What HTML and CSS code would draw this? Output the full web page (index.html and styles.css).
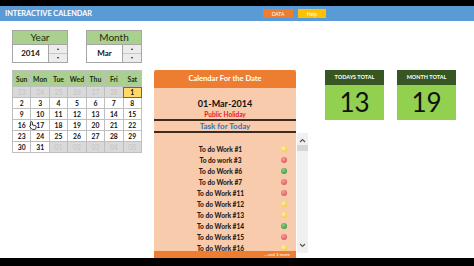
FILE: index.html
```html
<!DOCTYPE html>
<html lang="en">
<head>
    <meta charset="UTF-8">
    <meta name="viewport" content="width=device-width, initial-scale=1.0">
    <title>Interactive Calendar</title>
    <link rel="stylesheet" href="styles.css">
</head>
<body>
    <div class="letterbox"></div>

    <header class="topbar">
        <span class="title">INTERACTIVE CALENDAR</span>
        <div class="top-buttons">
            <span class="btn btn-data">DATA</span>
            <span class="btn btn-help">Help</span>
        </div>
    </header>

    <main class="main">
        <section class="left">
            <div class="pickers">
                <div class="picker">
                    <div class="picker-head">Year</div>
                    <div class="picker-body">
                        <span class="picker-value">2014</span>
                        <div class="spin">
                            <span class="spin-btn"><i class="tri up"></i></span>
                            <span class="spin-btn"><i class="tri down"></i></span>
                        </div>
                    </div>
                </div>
                <div class="picker">
                    <div class="picker-head">Month</div>
                    <div class="picker-body">
                        <span class="picker-value">Mar</span>
                        <div class="spin">
                            <span class="spin-btn"><i class="tri up"></i></span>
                            <span class="spin-btn"><i class="tri down"></i></span>
                        </div>
                    </div>
                </div>
            </div>

            <div class="cal-wrap">
                <table class="cal">
                    <thead>
                        <tr><th>Sun</th><th>Mon</th><th>Tue</th><th>Wed</th><th>Thu</th><th>Fri</th><th>Sat</th></tr>
                    </thead>
                    <tbody>
                        <tr><td class="off">23</td><td class="off">24</td><td class="off">25</td><td class="off">26</td><td class="off">27</td><td class="off">28</td><td class="today">1</td></tr>
                        <tr><td>2</td><td>3</td><td>4</td><td>5</td><td>6</td><td>7</td><td>8</td></tr>
                        <tr><td>9</td><td>10</td><td>11</td><td>12</td><td>13</td><td>14</td><td>15</td></tr>
                        <tr><td>16</td><td>17</td><td>18</td><td>19</td><td>20</td><td>21</td><td>22</td></tr>
                        <tr><td>23</td><td>24</td><td>25</td><td>26</td><td>27</td><td>28</td><td>29</td></tr>
                        <tr><td>30</td><td>31</td><td class="off">01</td><td class="off">02</td><td class="off">03</td><td class="off">04</td><td class="off">05</td></tr>
                    </tbody>
                </table>
                <!-- mouse pointer caught in the screenshot -->
                <svg class="pointer" width="8" height="9" viewBox="0 0 8 9">
                    <path d="M2.5 0.6 C3.2 0.6 3.4 1 3.4 1.6 V4 L6.2 4.5 C7 4.7 7.3 5.1 7.2 5.8 L6.8 7.6 C6.7 8.1 6.4 8.4 5.9 8.4 H3.4 C3 8.4 2.7 8.2 2.5 7.9 L0.8 5.6 C0.5 5.1 0.7 4.6 1.2 4.5 C1.5 4.4 1.7 4.6 1.6 4.7 V1.6 C1.6 1 1.9 0.6 2.5 0.6 Z" fill="#fff" stroke="#000" stroke-width="0.8"/>
                </svg>
            </div>
        </section>

        <section class="panel">
            <div class="panel-head">Calendar For the Date</div>
            <div class="panel-date">01-Mar-2014</div>
            <div class="panel-holiday">Public Holiday</div>
            <div class="panel-task">Task for Today</div>
            <ul class="tasks">
                <li><span>To do Work #1</span><i class="dot yellow"></i></li>
                <li><span>To do work #3</span><i class="dot red"></i></li>
                <li><span>To do Work #6</span><i class="dot green"></i></li>
                <li><span>To do Work #7</span><i class="dot red"></i></li>
                <li><span>To do Work #11</span><i class="dot red"></i></li>
                <li><span>To do Work #12</span><i class="dot yellow"></i></li>
                <li><span>To do Work #13</span><i class="dot yellow"></i></li>
                <li><span>To do Work #14</span><i class="dot green"></i></li>
                <li><span>To do Work #15</span><i class="dot red"></i></li>
                <li><span>To do Work #16</span><i class="dot yellow"></i></li>
            </ul>
            <div class="panel-foot">...and 3 more</div>
        </section>

        <div class="scrollbar">
            <svg class="arrow" width="7" height="5" viewBox="0 0 7 5"><path d="M1 4 L3.5 1.5 L6 4" fill="none" stroke="#555" stroke-width="1.1"/></svg>
            <span class="thumb"></span>
            <svg class="arrow bottom" width="7" height="5" viewBox="0 0 7 5"><path d="M1 1 L3.5 3.5 L6 1" fill="none" stroke="#555" stroke-width="1.1"/></svg>
        </div>

        <div class="totals">
            <div class="total">
                <div class="total-head">TODAYS TOTAL</div>
                <div class="total-value">13</div>
            </div>
            <div class="total">
                <div class="total-head">MONTH TOTAL</div>
                <div class="total-value">19</div>
            </div>
        </div>
    </main>

    <div class="letterbox bottom"></div>
</body>
</html>
```

FILE: styles.css
```css
body {
    margin: 0;
    background-color: #fff;
    font-family: 'Lato', 'Liberation Sans', sans-serif;
    color: #111;
    width: 474px;
    height: 266px;
    overflow: hidden;
}

.letterbox {
    height: 6px;
    background-color: #000;
}

.letterbox.bottom {
    height: 8px;
}

.topbar {
    display: flex;
    align-items: center;
    height: 15px;
    padding-left: 5px;
    background-color: #5b9bd5;
}

.title {
    color: #fff;
    font-size: 7.3px;
    font-weight: 700;
}

.top-buttons {
    display: flex;
    gap: 5px;
    margin-left: auto;
    margin-right: 148px;
}

.btn {
    display: flex;
    align-items: center;
    justify-content: center;
    height: 9px;
    color: #fff;
    font-size: 5px;
}

.btn-data {
    width: 30px;
    background-color: #ed7d31;
}

.btn-help {
    width: 28px;
    background-color: #ffc000;
}

.main {
    display: flex;
    align-items: flex-start;
    height: 237px;
    padding-left: 12px;
    overflow: hidden;
}

/* left column */
.left {
    width: 130px;
    padding-top: 9px;
}

.pickers {
    display: flex;
    gap: 18px;
    margin-bottom: 7px;
}

.picker {
    width: 54px;
    border: 1px solid #a6a6a6;
}

.picker-head {
    height: 13px;
    line-height: 13px;
    text-align: center;
    background-color: #a9d08e;
    border-bottom: 1px solid #a6a6a6;
    font-size: 10px;
    color: #1e2a14;
}

.picker-body {
    display: flex;
    height: 17px;
}

.picker-value {
    flex: 1;
    text-align: center;
    line-height: 17px;
    font-size: 8px;
    font-weight: 700;
}

.spin {
    display: flex;
    flex-direction: column;
    width: 18px;
    border-left: 1px solid #a6a6a6;
}

.spin-btn {
    flex: 1;
    display: flex;
    align-items: center;
    justify-content: center;
    background-color: #ececec;
}

.spin-btn + .spin-btn {
    border-top: 1px solid #c8c8c8;
}

.tri {
    width: 0;
    height: 0;
    border-left: 1.5px solid transparent;
    border-right: 1.5px solid transparent;
}

.tri.up {
    border-bottom: 2px solid #222;
}

.tri.down {
    border-top: 2px solid #222;
}

.cal-wrap {
    position: relative;
}

.cal {
    width: 130px;
    border-collapse: collapse;
    table-layout: fixed;
    font-size: 6.8px;
    font-weight: 700;
}

.cal th,
.cal td {
    border: 1px solid #bfbfbf;
    padding: 0;
    text-align: center;
}

.cal th {
    height: 15px;
    background-color: #a9d08e;
    color: #1e2a14;
}

.cal td {
    height: 10px;
    background-color: #fff;
}

.cal td.off {
    background-color: #d9d9d9;
    color: #c4c4c4;
    font-weight: 400;
}

.cal td.today {
    background-color: #ffd966;
    outline: 1px solid #6b6b4a;
    outline-offset: -1px;
}

.pointer {
    position: absolute;
    left: 17px;
    top: 51px;
}

/* date panel */
.panel {
    width: 142px;
    height: 188px;
    margin-top: 49px;
    margin-left: 12px;
    display: flex;
    flex-direction: column;
    background-color: #f8cbad;
}

.panel-head {
    height: 18px;
    line-height: 18px;
    border-radius: 3px 3px 0 0;
    background-color: #ed7d31;
    color: #fff;
    text-align: center;
    font-size: 7.5px;
    font-weight: 700;
}

.panel-date {
    margin-top: 10px;
    height: 12px;
    line-height: 12px;
    text-align: center;
    font-size: 9px;
    font-weight: 700;
}

.panel-holiday {
    height: 9px;
    line-height: 9px;
    text-align: center;
    color: #e8141e;
    font-size: 6.5px;
    font-weight: 700;
    border-bottom: 2px solid #3d2b1f;
}

.panel-task {
    height: 10px;
    line-height: 10px;
    text-align: center;
    color: #2e75b6;
    font-size: 8px;
    font-weight: 700;
    border-bottom: 2px solid #3d2b1f;
}

.tasks {
    flex: 1;
    list-style: none;
    margin: 0;
    padding: 10px 5px 0 10px;
    overflow: hidden;
}

.tasks li {
    display: grid;
    grid-template-columns: 1fr 14px;
    align-items: center;
    height: 11px;
    font-size: 6.6px;
    font-weight: 900;
    color: #2a1a10;
}

.tasks li span {
    text-align: center;
}

.dot {
    justify-self: center;
    width: 6px;
    height: 6px;
    border-radius: 50%;
}

.dot.yellow {
    background: radial-gradient(circle at 40% 35%, #fff2a8, #f2cf4a 70%);
}

.dot.red {
    background: radial-gradient(circle at 40% 35%, #f6a0a0, #dc5f5f 70%);
}

.dot.green {
    background: radial-gradient(circle at 40% 35%, #8ed08e, #3f9f48 70%);
}

.panel-foot {
    height: 7px;
    line-height: 7px;
    padding-right: 6px;
    text-align: right;
    background-color: #ed7d31;
    color: #fde3d2;
    font-size: 4.5px;
    font-weight: 700;
}

/* scrollbar beside the task list */
.scrollbar {
    position: relative;
    width: 11px;
    height: 120px;
    margin-top: 112px;
    margin-left: 1px;
    background-color: #f0f0f0;
}

.arrow {
    display: block;
    margin: 5px auto 2px;
}

.arrow.bottom {
    position: absolute;
    left: 2px;
    bottom: 5px;
    margin: 0;
}

.thumb {
    display: block;
    height: 6px;
    background-color: #d6d6d6;
}

/* totals */
.totals {
    display: flex;
    gap: 13px;
    margin-top: 49px;
    margin-left: 17px;
}

.total {
    width: 59px;
}

.total-head {
    height: 15px;
    line-height: 15px;
    text-align: center;
    background-color: #375623;
    color: #fff;
    font-size: 5.5px;
    font-weight: 700;
}

.total-value {
    height: 35px;
    line-height: 35px;
    text-align: center;
    background-color: #92d050;
    color: #111;
    font-size: 26px;
}
```
